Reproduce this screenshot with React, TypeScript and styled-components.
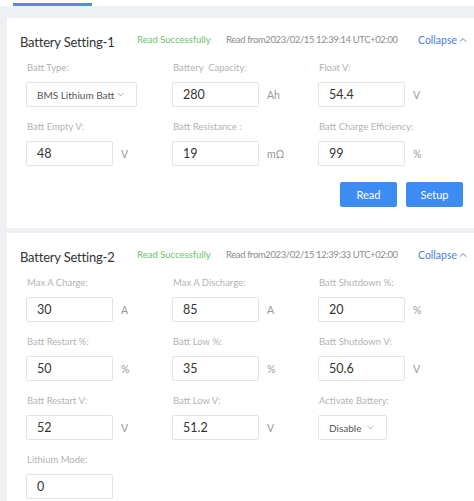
import React from 'react';
import styled, { createGlobalStyle } from 'styled-components';
import { ChevronDown, ChevronUp } from 'lucide-react';

const GlobalStyle = createGlobalStyle`
  html, body {
    margin: 0;
    padding: 0;
    background: #eef0f3;
    font-family: Lato, "Noto Sans", sans-serif;
    overflow: hidden;
  }
`;

const Page = styled.div`
  width: 474px;
  height: 501px;
  overflow: hidden;
`;

const TabBar = styled.div`
  height: 6px;
  background: #ffffff;
  display: flex;
  align-items: flex-end;
  padding-left: 13px;
  margin-bottom: 12px;
`;

const TabIndicator = styled.div`
  width: 79px;
  height: 3px;
  background: #4a8fe8;
`;

const Stack = styled.div`
  display: flex;
  flex-direction: column;
  gap: 5px;
  padding-left: 7px;
`;

const Card = styled.section`
  background: #ffffff;
  padding: 0 0 21px 0;
`;

const Header = styled.div`
  display: flex;
  align-items: center;
  height: 43px;
  padding: 5px 0 0 13px;
  box-sizing: border-box;
`;

const Title = styled.h2`
  margin: 0;
  font-size: 13px;
  letter-spacing: -0.2px;
  font-weight: 400;
  color: #333333;
  width: 117px;
  flex: none;
  white-space: nowrap;
`;

const Status = styled.span`
  font-size: 9.5px;
  color: #6cc26c;
  width: 89px;
  flex: none;
  white-space: nowrap;
  margin-top: -5px;
`;

const ReadTime = styled.span`
  font-size: 9.5px;
  letter-spacing: -0.4px;
  color: #8c8c8c;
  width: 192px;
  flex: none;
  white-space: nowrap;
  margin-top: -5px;
`;

const Collapse = styled.span`
  display: flex;
  align-items: center;
  font-size: 10.5px;
  color: #4a7fe0;
  white-space: nowrap;
  margin-top: -4px;
`;

const Grid = styled.div`
  display: grid;
  grid-template-columns: repeat(3, 146px);
  row-gap: 13px;
  padding-left: 19px;
`;

const Field = styled.div`
  display: flex;
  flex-direction: column;
`;

const Label = styled.label`
  font-size: 9.5px;
  line-height: 14px;
  color: #b3b3b3;
  margin-bottom: 7px;
  padding-left: 1px;
  white-space: pre;
`;

const InputRow = styled.div`
  display: flex;
  align-items: center;
  gap: 8px;
`;

const Box = styled.div<{ $width: number }>`
  width: ${({ $width }) => $width}px;
  height: 25px;
  box-sizing: border-box;
  border: 1px solid #e3e3e3;
  border-radius: 2px;
  display: flex;
  align-items: center;
  justify-content: space-between;
  padding: 0 10px;
  font-size: 12.5px;
  color: #333333;
  white-space: nowrap;
`;

const SelectText = styled.span`
  font-size: 10px;
  color: #555555;
`;

const Unit = styled.span`
  font-size: 10.5px;
  color: #999999;
`;

const Actions = styled.div`
  display: flex;
  justify-content: flex-end;
  gap: 9px;
  padding-right: 11px;
  margin-top: 16px;
`;

const Button = styled.button`
  width: 57px;
  height: 25px;
  border: none;
  border-radius: 2px;
  background: #3d8cf4;
  color: #ffffff;
  font-family: inherit;
  font-size: 11px;
  padding: 0;
`;

type FieldDef = {
  label: string;
  value: string;
  unit?: string;
  select?: boolean;
  width?: number;
};

const card1: FieldDef[] = [
  { label: 'Batt Type:', value: 'BMS Lithium Batt', select: true, width: 111 },
  { label: 'Battery  Capacity:', value: '280', unit: 'Ah' },
  { label: 'Float V:', value: '54.4', unit: 'V' },
  { label: 'Batt Empty V:', value: '48', unit: 'V' },
  { label: 'Batt Resistance :', value: '19', unit: 'mΩ' },
  { label: 'Batt Charge Efficiency:', value: '99', unit: '%' },
];

const card2: FieldDef[] = [
  { label: 'Max A Charge:', value: '30', unit: 'A' },
  { label: 'Max A Discharge:', value: '85', unit: 'A' },
  { label: 'Batt Shutdown %:', value: '20', unit: '%' },
  { label: 'Batt Restart %:', value: '50', unit: '%' },
  { label: 'Batt Low %:', value: '35', unit: '%' },
  { label: 'Batt Shutdown V:', value: '50.6', unit: 'V' },
  { label: 'Batt Restart V:', value: '52', unit: 'V' },
  { label: 'Batt Low V:', value: '51.2', unit: 'V' },
  { label: 'Activate Battery:', value: 'Disable', select: true, width: 69 },
  { label: 'Lithium Mode:', value: '0' },
];

const FieldView: React.FC<{ f: FieldDef }> = ({ f }) => (
  <Field>
    <Label>{f.label}</Label>
    <InputRow>
      <Box $width={f.width ?? 87}>
        {f.select ? (
          <>
            <SelectText>{f.value}</SelectText>
            <ChevronDown size={11} strokeWidth={1.5} color="#888" />
          </>
        ) : (
          f.value
        )}
      </Box>
      {f.unit && <Unit>{f.unit}</Unit>}
    </InputRow>
  </Field>
);

const SettingCard: React.FC<{
  title: string;
  time: string;
  fields: FieldDef[];
  actions?: boolean;
}> = ({ title, time, fields, actions }) => (
  <Card>
    <Header>
      <Title>{title}</Title>
      <Status>Read Successfully</Status>
      <ReadTime>Read from{time} UTC+02:00</ReadTime>
      <Collapse>
        Collapse
        <ChevronUp size={12} strokeWidth={2} />
      </Collapse>
    </Header>
    <Grid>
      {fields.map((f) => (
        <FieldView key={f.label} f={f} />
      ))}
    </Grid>
    {actions && (
      <Actions>
        <Button>Read</Button>
        <Button>Setup</Button>
      </Actions>
    )}
  </Card>
);

export default function App() {
  return (
    <Page>
      <GlobalStyle />
      <TabBar>
        <TabIndicator />
      </TabBar>
      <Stack>
        <SettingCard
          title="Battery Setting-1"
          time="2023/02/15 12:39:14"
          fields={card1}
          actions
        />
        <SettingCard
          title="Battery Setting-2"
          time="2023/02/15 12:39:33"
          fields={card2}
        />
      </Stack>
    </Page>
  );
}
